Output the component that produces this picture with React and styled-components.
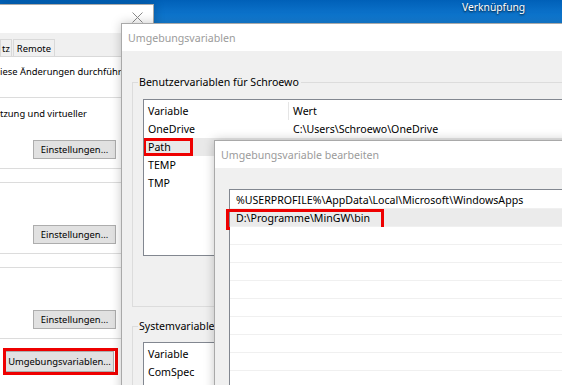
import React from 'react'
import styled, { createGlobalStyle } from 'styled-components'

const Global = createGlobalStyle`
  html, body { margin: 0; padding: 0; }
  body {
    font-family: 'Noto Sans', 'Open Sans', sans-serif;
    font-size: 10.6px;
    color: #000;
  }
`

const Desktop = styled.div`
  position: relative;
  width: 562px;
  height: 385px;
  overflow: hidden;
  background: linear-gradient(180deg, #0060b8 0px, #1580d8 24px);
`

const ShortcutLabel = styled.div`
  position: absolute;
  left: 462px;
  top: 0;
  color: #fff;
  font-size: 10.3px;
  line-height: 14px;
  text-shadow: 0 1px 2px rgba(0, 0, 0, 0.8);
`

const Window = styled.div`
  position: absolute;
  left: ${p => p.$x}px;
  top: ${p => p.$y}px;
  width: ${p => p.$w}px;
  height: ${p => p.$h}px;
  display: flex;
  flex-direction: column;
  background: #f0f0f0;
  border: 1px solid #a9a9a9;
  box-shadow: 0 0 10px rgba(0, 0, 0, 0.22);
  overflow: hidden;
  font-size: ${p => p.$fs || 10.6}px;
`

const TitleBar = styled.div`
  position: relative;
  flex: none;
  height: ${p => p.$h}px;
  background: #fff;
  color: #9b9b9b;
  display: flex;
  align-items: center;
  padding-left: 6px;
  font-size: 10.6px;
`

const CloseGlyph = styled.svg`
  position: absolute;
  right: 10px;
  top: 7px;
`

/* ---- system properties (behind) ---- */

const TabStrip = styled.div`
  flex: none;
  height: 23px;
  display: flex;
  align-items: flex-end;
  border-bottom: 1px solid #d9d9d9;
`

const Tab = styled.div`
  height: 16px;
  padding: 0 ${p => p.$pad}px;
  border: 1px solid #d9d9d9;
  border-bottom: none;
  margin-right: 1px;
  background: #f0f0f0;
  display: flex;
  align-items: center;
`

const TabPage = styled.div`
  flex: 1;
  background: #fff;
  display: flex;
  flex-direction: column;
  padding-top: 7px;
  white-space: nowrap;
`

const Line = styled.div`
  line-height: 16px;
  height: 16px;
`

const Group = styled.div`
  flex: none;
  height: 72px;
  width: 128px;
  margin-top: ${p => p.$mt}px;
  box-sizing: border-box;
  border: 1px solid #dcdcdc;
  border-left: none;
  display: flex;
  flex-direction: column;
  padding: 8px 0 9px;
`

const GroupText = styled(Line)`
  flex: 1;
`

const Button = styled.div`
  flex: none;
  height: ${p => p.$h || 17}px;
  width: ${p => p.$w}px;
  margin: ${p => p.$mt || 0}px 0 0 ${p => p.$ml}px;
  border: 1px solid #adadad;
  background: #e1e1e1;
  display: flex;
  align-items: center;
  justify-content: center;
  white-space: nowrap;
  position: relative;
`

const Mark = styled.div`
  position: absolute;
  left: ${p => p.$l}px;
  top: ${p => p.$t}px;
  width: ${p => p.$w}px;
  height: ${p => p.$h}px;
  border: 3px solid #ee0000;
  box-sizing: border-box;
  pointer-events: none;
`

/* ---- environment variables dialog ---- */

const Body = styled.div`
  flex: 1;
  display: flex;
  flex-direction: column;
  padding: ${p => p.$pt}px 0 0 ${p => p.$pl}px;
`

const GroupBox = styled.fieldset`
  flex: none;
  margin: ${p => p.$mt}px 0 0 0;
  height: ${p => p.$h}px;
  box-sizing: border-box;
  border: 1px solid #dcdcdc;
  border-right: none;
  padding: ${p => p.$pt}px 0 0 10px;
  min-width: 0;

  legend {
    padding: 0 2px 0 1px;
    margin-left: -5px;
    line-height: 16px;
  }
`

const ListView = styled.div`
  height: ${p => p.$h}px;
  background: #fff;
  border: 1px solid #828790;
  border-right: none;
  padding-top: 2px;
  box-sizing: border-box;
  overflow: hidden;
`

const Row = styled.div`
  height: 18px;
  display: flex;
  align-items: center;
  position: relative;
  background: ${p => (p.$selected ? '#e9e9e9' : 'transparent')};
`

const Cell = styled.div`
  width: ${p => p.$w}px;
  padding-left: 4px;
  box-sizing: border-box;
  height: 100%;
  display: flex;
  align-items: center;
  white-space: nowrap;
  border-right: ${p => (p.$divider ? '1px solid #e5e5e5' : 'none')};
`

/* ---- edit dialog ---- */

const EditList = styled.div`
  margin: ${p => p.$mt}px 0 0 ${p => p.$ml}px;
  flex: 1;
  background: #fff;
  border: 1px solid #828790;
  border-right: none;
  border-bottom: none;
  padding-top: 1px;
`

const EditRow = styled.div`
  position: relative;
  height: 18px;
  box-sizing: border-box;
  padding-left: 6px;
  display: flex;
  align-items: center;
  border-bottom: 1px solid #f0f0f0;
  background: ${p => (p.$selected ? '#ebebeb' : '#fff')};
  white-space: nowrap;
`

const userVars = [
  ['OneDrive', 'C:\\Users\\Schroewo\\OneDrive'],
  ['Path', ''],
  ['TEMP', ''],
  ['TMP', '']
]

const pathEntries = [
  '%USERPROFILE%\\AppData\\Local\\Microsoft\\WindowsApps',
  'D:\\Programme\\MinGW\\bin',
  '', '', '', '', '', '', '', '', '', ''
]

const Close = () => (
  <CloseGlyph width="11" height="11" viewBox="0 0 11 11">
    <path d="M0.5 0.5 L10.5 10.5 M10.5 0.5 L0.5 10.5" stroke="#8a8a8a" strokeWidth="1" fill="none" />
  </CloseGlyph>
)

export default function App() {
  return (
    <Desktop>
      <Global />
      <ShortcutLabel>Verknüpfung</ShortcutLabel>

      <Window $x={-1} $y={4} $w={153} $h={400} $fs={9.4}>
        <TitleBar $h={28}>
          <Close />
        </TitleBar>
        <TabStrip>
          <Tab $pad={1}>tz</Tab>
          <Tab $pad={3}>Remote</Tab>
        </TabStrip>
        <TabPage>
          <Line>iese Änderungen durchführen zu können.</Line>
          <Group $mt={17}>
            <GroupText>tzung und virtueller</GroupText>
            <Button $w={81} $ml={33}>Einstellungen...</Button>
          </Group>
          <Group $mt={13}>
            <GroupText />
            <Button $w={81} $ml={33}>Einstellungen...</Button>
          </Group>
          <Group $mt={13}>
            <GroupText />
            <Button $w={81} $ml={33}>Einstellungen...</Button>
          </Group>
          <Button $w={107} $ml={5} $mt={12} $h={19}>
            Umgebungsvariablen...
            <Mark $l={-3} $t={-4} $w={115} $h={27} />
          </Button>
        </TabPage>
      </Window>

      <Window $x={121} $y={23} $w={460} $h={380}>
        <TitleBar $h={27}>Umgebungsvariablen</TitleBar>
        <Body $pt={23} $pl={10}>
          <GroupBox $mt={0} $h={233} $pt={9}>
            <legend>Benutzervariablen für Schroewo</legend>
            <ListView $h={157}>
              <Row>
                <Cell $w={145} $divider>Variable</Cell>
                <Cell $w={280}>Wert</Cell>
              </Row>
              {userVars.map(([name, value], idx) => (
                <Row key={idx} $selected={name === 'Path'}>
                  <Cell $w={145}>{name}</Cell>
                  <Cell $w={280}>{value}</Cell>
                  {name === 'Path' && <Mark $l={-1} $t={0} $w={50} $h={18} />}
                </Row>
              ))}
            </ListView>
          </GroupBox>
          <GroupBox $mt={11} $h={80} $pt={8}>
            <legend>Systemvariablen</legend>
            <ListView $h={60}>
              <Row>
                <Cell $w={145} $divider>Variable</Cell>
                <Cell $w={280}>Wert</Cell>
              </Row>
              <Row><Cell $w={145}>ComSpec</Cell></Row>
              <Row><Cell $w={145}>DriverData</Cell></Row>
            </ListView>
          </GroupBox>
        </Body>
      </Window>

      <Window $x={214} $y={140} $w={380} $h={280}>
        <TitleBar $h={27}>Umgebungsvariable bearbeiten</TitleBar>
        <EditList $mt={21} $ml={14}>
          {pathEntries.map((entry, idx) => (
            <EditRow key={idx} $selected={idx === 1}>
              {entry}
              {idx === 1 && <Mark $l={-4} $t={0} $w={158} $h={21} />}
            </EditRow>
          ))}
        </EditList>
      </Window>
    </Desktop>
  )
}
